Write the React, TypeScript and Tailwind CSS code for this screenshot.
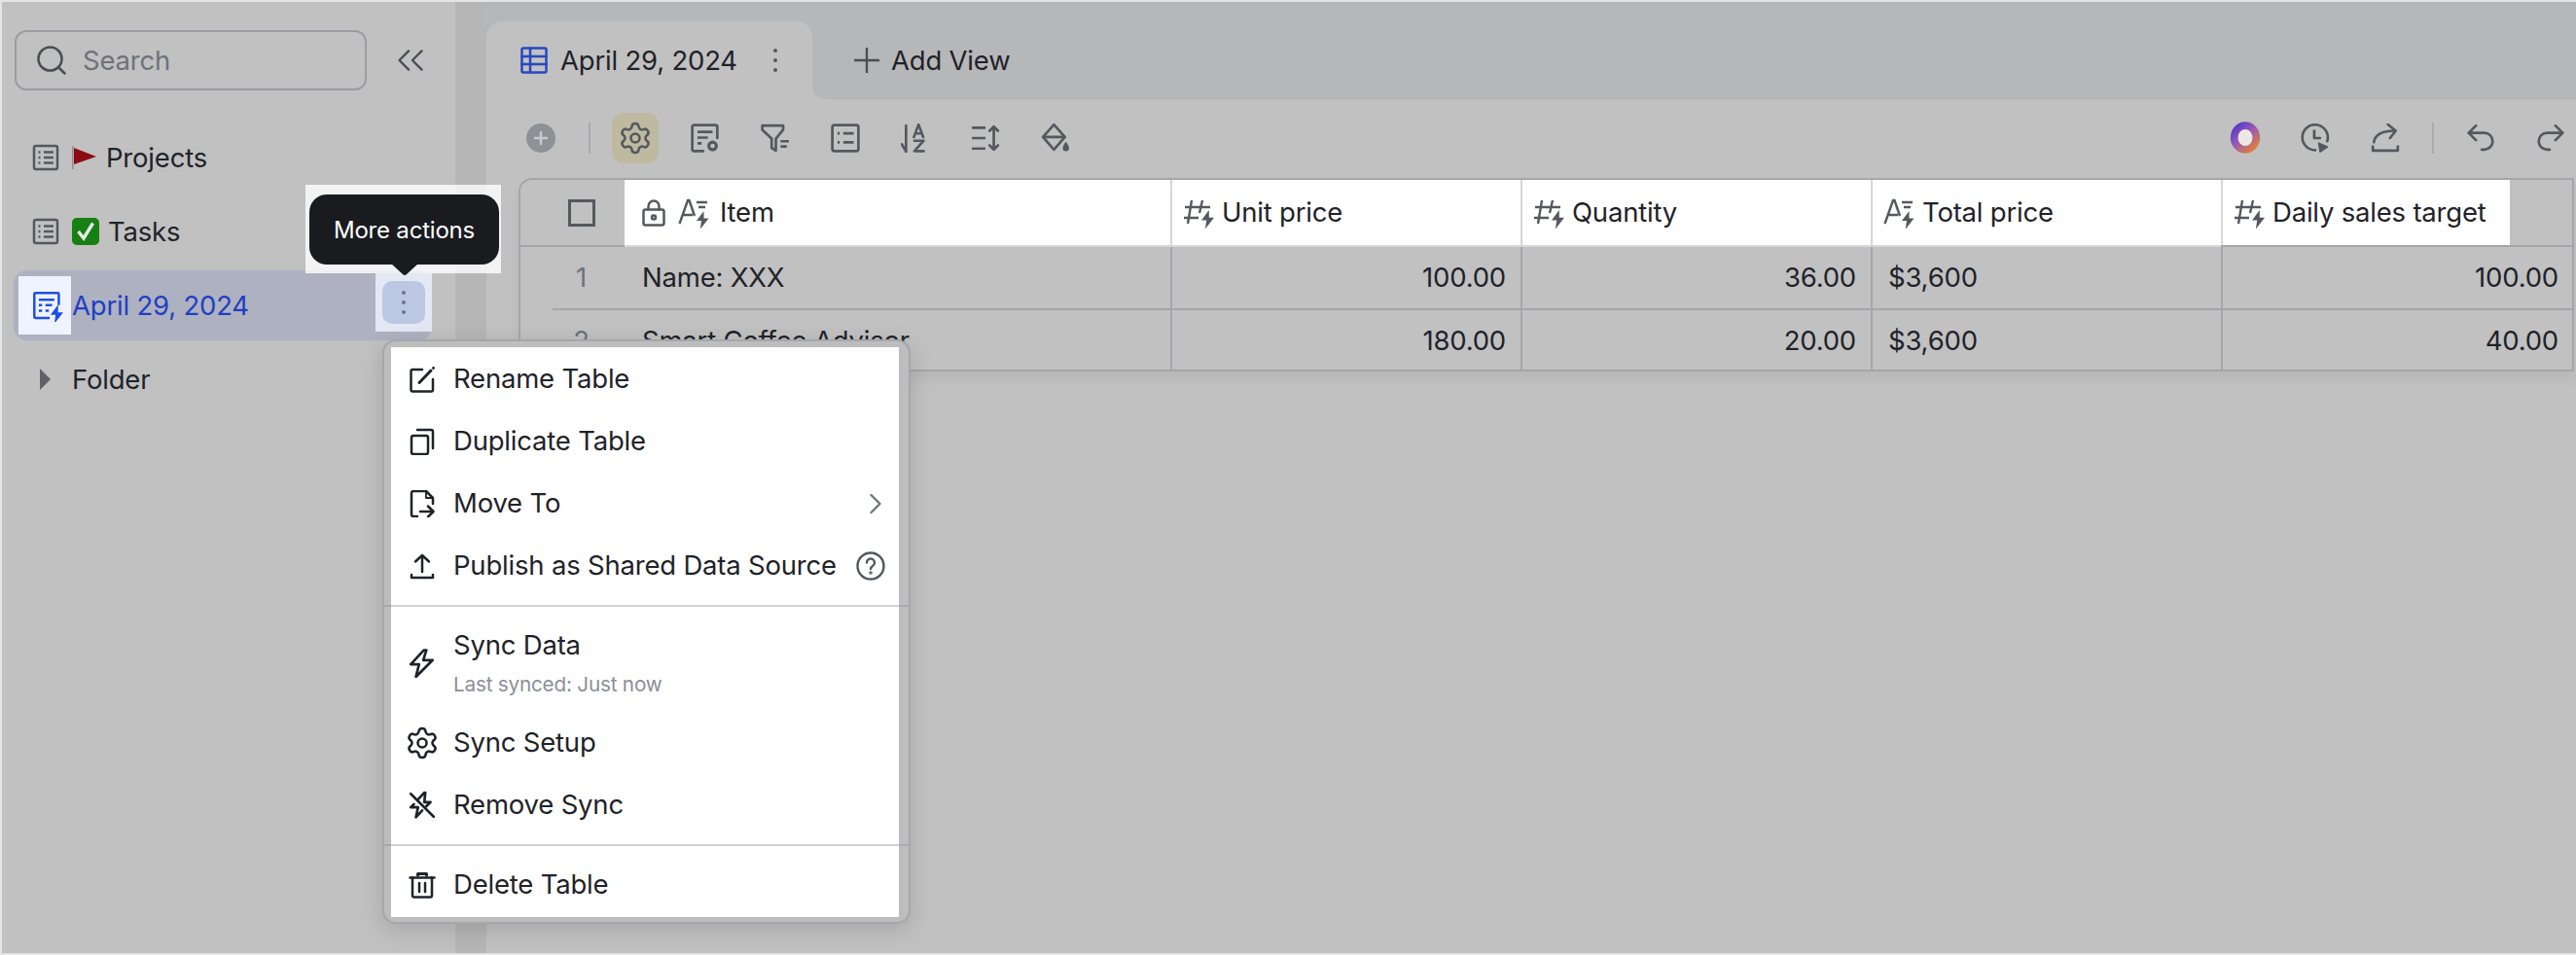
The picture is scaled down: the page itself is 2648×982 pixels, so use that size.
import { ChevronRight, ChevronsLeft, Search, Settings } from 'lucide-react'
import type { ReactNode } from 'react'

type IconProps = { className?: string; size?: number }

function Icon({ className, size = 28, children }: IconProps & { children: ReactNode }) {
  return (
    <svg
      width={size}
      height={size}
      viewBox="0 0 28 28"
      fill="none"
      stroke="currentColor"
      strokeWidth={2.5}
      strokeLinecap="round"
      strokeLinejoin="round"
      className={className}
    >
      {children}
    </svg>
  )
}

const Bolt = ({ x = 0, y = 0, s = 1 }: { x?: number; y?: number; s?: number }) => (
  <path
    transform={`translate(${x} ${y}) scale(${s})`}
    d="M6 0 L0 8 H4 L3 15 L10 6 H6 Z"
    fill="currentColor"
    stroke="none"
  />
)

const ListTableIcon = () => (
  <Icon>
    <rect x="2" y="2" width="24" height="24" rx="2" />
    <path d="M6.5 8.5h2M12 8.5h10M6.5 14h2M12 14h10M6.5 19.5h2M12 19.5h10" strokeLinecap="butt" />
  </Icon>
)

const SyncTableIcon = () => (
  <Icon size={32}>
    <path d="M15 24.5H3a1 1 0 0 1-1-1V3a1 1 0 0 1 1-1h20a1 1 0 0 1 1 1v9" strokeWidth={2.2} />
    <path d="M6 8h14M6 13h3M12 13h6M6 18h3M12 18h3" strokeWidth={2.2} strokeLinecap="butt" />
    <Bolt x={16.5} y={12.5} s={1.15} />
  </Icon>
)

const FlagEmoji = () => (
  <svg width="26" height="24" viewBox="0 0 26 24" className="shrink-0">
    <rect x="0" y="0" width="1.5" height="24" fill="#8d8f8c" />
    <path d="M2 2 L25 11 L2 19 Z" fill="#8c0b12" />
  </svg>
)

const CheckEmoji = () => (
  <svg width="28" height="28" viewBox="0 0 28 28" className="shrink-0">
    <rect width="28" height="28" rx="5" fill="#178012" />
    <path d="M6.5 14 L12 21 L21.5 5.5" fill="none" stroke="#e9e9e9" strokeWidth="3.4" />
  </svg>
)

const GridIcon = () => (
  <Icon className="text-[#2748c0]">
    <rect x="1.5" y="1.5" width="25" height="25" rx="1.5" />
    <path d="M1.5 10h25M1.5 18h25M10 1.5v25" />
  </Icon>
)

const FormIcon = () => (
  <Icon size={30}>
    <path d="M12 26.5H3a1.5 1.5 0 0 1-1.5-1.5V3A1.5 1.5 0 0 1 3 1.5h21A1.5 1.5 0 0 1 25.5 3v11" />
    <path d="M6.5 8h14.5M6.5 13.5h10M6.5 19h4" strokeLinecap="butt" />
    <circle cx="21" cy="21.5" r="3.6" strokeWidth={3} />
  </Icon>
)

const FilterIcon = () => (
  <Icon size={30}>
    <path d="M1.5 2h20v4l-7 8.5V26l-4-2.5v-9L1.5 6Z" />
    <path d="M19 17h8M19 22h6" strokeLinecap="butt" />
  </Icon>
)

const GroupIcon = () => (
  <Icon size={30}>
    <rect x="1.5" y="1.5" width="25" height="25" rx="2" />
    <path d="M6.5 9.5h2M12 9.5h10M6.5 18h2M12 18h10" strokeLinecap="butt" />
  </Icon>
)

const SortIcon = () => (
  <Icon size={30}>
    <path d="M5 2v25M5 27l-4-7" />
    <path d="M12.5 13l4.5-12 4.5 12M14 9.5h6M13 16.5h9l-9 10h9" strokeWidth={2.4} />
  </Icon>
)

const RowHeightIcon = () => (
  <Icon size={30}>
    <path d="M1 4h13M1 14h13M1 24h13" strokeLinecap="butt" />
    <path d="M22 3v22M18 7l4-4 4 4M18 21l4 4 4-4" />
  </Icon>
)

const BucketIcon = () => (
  <Icon size={30}>
    <path d="M12.5 1 L23 13 L12.5 25 L2 13 Z" />
    <path d="M2.5 13h20" />
    <path d="M24 17.5c-1.8 2.5-3 4-3 6a3 3 0 0 0 6 0c0-2-1.2-3.5-3-6Z" fill="currentColor" stroke="none" />
  </Icon>
)

const RingLogo = () => (
  <svg width="32" height="33" viewBox="0 0 30 32">
    <defs>
      <linearGradient id="ring" x1="0.1" y1="0" x2="0.9" y2="1">
        <stop offset="0" stopColor="#5b3cc4" />
        <stop offset="0.45" stopColor="#9a58b8" />
        <stop offset="1" stopColor="#e0803a" />
      </linearGradient>
    </defs>
    <ellipse cx="15" cy="16" rx="11" ry="12" fill="#ece8e4" stroke="url(#ring)" strokeWidth="7.5" />
  </svg>
)

const HistoryIcon = () => (
  <Icon size={30}>
    <path d="M14 25.5A12.2 12.2 0 1 1 26 13.5a12 12 0 0 1-.6 3.5" />
    <path d="M13 7v7h5.5" />
    <path d="M17 18.5l9 4-7.5 5Z" fill="currentColor" strokeWidth={1} />
  </Icon>
)

const ShareIcon = () => (
  <Icon size={30}>
    <path d="M3 18c1-7 7-11 20-11" />
    <path d="M16.5 1L24 7l-5.5 7" />
    <path d="M2 21v5h24v-5" strokeLinecap="butt" />
  </Icon>
)

const UndoIcon = () => (
  <Icon size={30}>
    <path d="M3 9h14.5a8 8 0 0 1 0 16H15" />
    <path d="M9.5 2L2.5 9l7 7" />
  </Icon>
)

const RedoIcon = () => (
  <Icon size={30}>
    <path d="M25 9H10.5a8 8 0 0 0 0 16H13" />
    <path d="M18.5 2l7 7-7 7" />
  </Icon>
)

const LockIcon = () => (
  <Icon>
    <rect x="3.5" y="10.5" width="21" height="16" rx="2" />
    <path d="M8.5 10.5V7a5.5 5.5 0 0 1 11 0v3.5" />
    <circle cx="14" cy="18.5" r="2" />
  </Icon>
)

const TextFieldIcon = () => (
  <svg width="32" height="32" viewBox="0 0 32 32" fill="none" stroke="currentColor" strokeWidth="2.4">
    <path d="M1.5 27L10 3h1.5L17 19M5 18h10" />
    <path d="M19 5h11M21 10h7" />
    <Bolt x={19} y={14} s={1.25} />
  </svg>
)

const NumberFieldIcon = () => (
  <svg width="32" height="32" viewBox="0 0 32 32" fill="none" stroke="currentColor" strokeWidth="2.4">
    <path d="M9 3L5 27M20 3L17 16M2 10h26M1 21h15" />
    <Bolt x={19} y={13} s={1.3} />
  </svg>
)

const RenameIcon = () => (
  <Icon>
    <path d="M14 4H4a1.5 1.5 0 0 0-1.5 1.5V25A1.5 1.5 0 0 0 4 26.5h19.5A1.5 1.5 0 0 0 25 25V14" />
    <path d="M11 17.5L23 5" strokeWidth={3} />
    <circle cx="25.5" cy="2.5" r="1.4" fill="currentColor" stroke="none" />
  </Icon>
)

const CopyIcon = () => (
  <Icon>
    <rect x="3" y="8" width="17" height="19" rx="2" />
    <path d="M9 2h14a2 2 0 0 1 2 2v17" />
  </Icon>
)

const MoveIcon = () => (
  <Icon>
    <path d="M9 27H5a2 2 0 0 1-2-2V3a2 2 0 0 1 2-2h13l7 7v6" />
    <path d="M18 1v7h7" strokeWidth={1.8} />
    <path d="M12 22h13M20 16.5L25.5 22 20 27.5" />
  </Icon>
)

const UploadIcon = () => (
  <Icon>
    <path d="M14 20V3M7 9.5L14 3l7 6.5" />
    <path d="M3 23v3h22v-3" />
  </Icon>
)

const SyncIcon = () => (
  <Icon size={30}>
    <path d="M15.5 1.5L3 15h8l-3 12L24 11h-9l3-9.5Z" />
  </Icon>
)

const SyncOffIcon = () => (
  <Icon size={30}>
    <path d="M16 2L9.5 9M6 13l-3 3h7l-2 9.5L14 19M18 15l4-4h-6l1-9" />
    <path d="M3 3l22 22" />
  </Icon>
)

const TrashIcon = () => (
  <Icon>
    <path d="M1.5 6.5h25" />
    <path d="M9.5 4V2.5h9V4" strokeWidth={3} />
    <path d="M4 6.5V25a1.5 1.5 0 0 0 1.5 1.5h17A1.5 1.5 0 0 0 24 25V6.5" />
    <path d="M11 12v9M17 12v9" />
  </Icon>
)

const HelpIcon = () => (
  <svg width="30" height="30" viewBox="0 0 30 30" fill="none" stroke="currentColor" strokeWidth="2.4" strokeLinecap="round" className="text-[#55585f]">
    <circle cx="15" cy="15" r="13.5" />
    <path d="M11 11.5a4 4 0 1 1 6 3.5c-1.3.8-2 1.5-2 3" />
    <circle cx="15" cy="22" r="0.6" fill="currentColor" />
  </svg>
)

const Dots = ({ className }: IconProps) => (
  <span className={`flex flex-col items-center gap-[6px] ${className}`}>
    <span className="size-[4px] rounded-full bg-current" />
    <span className="size-[4px] rounded-full bg-current" />
    <span className="size-[4px] rounded-full bg-current" />
  </span>
)

function TreeRow({ icon, emoji, label }: { icon: ReactNode; emoji?: ReactNode; label: string }) {
  return (
    <div className="flex h-[76px] items-center pl-[31px] text-[#55585f]">
      {icon}
      <span className="ml-[13px] flex items-center gap-[9px] text-[#1f2329]">
        {emoji}
        <span className="pt-[2px]">{label}</span>
      </span>
    </div>
  )
}

function Sidebar() {
  return (
    <aside className="w-[466px] shrink-0 pt-[29px]">
      <div className="flex items-center">
        <div className="ml-[13px] flex h-[62px] w-[362px] items-center rounded-[12px] border-2 border-[#9b9ca1] pl-[18px] text-[#6f727a]">
          <Search size={36} strokeWidth={1.7} className="text-[#4b4e55]" />
          <span className="ml-[14px] pt-[2px]">Search</span>
        </div>
        <ChevronsLeft size={46} strokeWidth={1.25} className="ml-[22px] text-[#4b4e55]" />
      </div>
      <div className="mt-[31px]">
        <TreeRow icon={<ListTableIcon />} emoji={<FlagEmoji />} label="Projects" />
        <TreeRow icon={<ListTableIcon />} emoji={<CheckEmoji />} label="Tasks" />
        <div className="flex h-[76px] items-center">
          <div className="ml-[12px] flex h-[72px] w-[430px] items-center rounded-[14px] bg-[#aeb1c0] pl-[5px] text-[#1f3fc5]">
            <span className="flex h-[60px] w-[54px] items-center bg-[#eff3ff] pl-[14px] pt-[2px] text-[#1d50e8]">
              <SyncTableIcon />
            </span>
            <span className="ml-[1px] pt-[2px]">April 29, 2024</span>
          </div>
        </div>
        <div className="flex h-[76px] items-center pl-[39px] text-[#1f2329]">
          <span className="border-y-[11px] border-l-[11px] border-y-transparent border-l-[#5f6269]" />
          <span className="ml-[22px] pt-[2px]">Folder</span>
        </div>
      </div>
    </aside>
  )
}

function ToolButton({ children, active }: { children: ReactNode; active?: boolean }) {
  return (
    <div className="flex h-[52px] w-[72px] items-center justify-center">
      <span className={`flex h-[52px] w-[48px] items-center justify-center rounded-[12px] ${active ? 'bg-[#bfb9a1]' : ''}`}>
        {children}
      </span>
    </div>
  )
}

function TabBar() {
  return (
    <div className="flex h-[100px] bg-[#b6b7b9] pt-[20px]">
      <div className="relative flex h-[80px] w-[335px] items-center rounded-t-[16px] bg-[#c1c1c1] pl-[35px] text-[#1f2329]">
        <GridIcon />
        <span className="ml-[13px] pt-[2px]">April 29, 2024</span>
        <Dots className="ml-[37px] text-[#55585f]" />
        <span className="absolute bottom-0 left-full size-[14px] bg-[#c1c1c1]">
          <span className="block size-[14px] rounded-bl-[14px] bg-[#b6b7b9]" />
        </span>
      </div>
      <div className="ml-[42px] flex h-[80px] items-center text-[#1f2329]">
        <svg width="28" height="28" viewBox="0 0 28 28" stroke="#4b4e55" strokeWidth="2.4">
          <path d="M14 1v26M1 14h26" />
        </svg>
        <span className="ml-[11px] pt-[2px]">Add View</span>
      </div>
    </div>
  )
}

function Toolbar() {
  return (
    <div className="flex h-[81px] items-center pb-[2px] pl-[41px] pr-[2px] text-[#55585f]">
      <span className="flex size-[30px] items-center justify-center rounded-full bg-[#8e9196]">
        <svg width="14" height="14" viewBox="0 0 14 14" stroke="#c9cacc" strokeWidth="2.4">
          <path d="M7 0v14M0 7h14" />
        </svg>
      </span>
      <span className="ml-[34px] mr-[10px] h-[32px] w-[2px] bg-[#a9aaae]" />
      <ToolButton active>
        <Settings size={36} strokeWidth={1.7} />
      </ToolButton>
      <ToolButton><FormIcon /></ToolButton>
      <ToolButton><FilterIcon /></ToolButton>
      <ToolButton><GroupIcon /></ToolButton>
      <ToolButton><SortIcon /></ToolButton>
      <ToolButton><RowHeightIcon /></ToolButton>
      <ToolButton><BucketIcon /></ToolButton>
      <div className="ml-auto flex items-center gap-[24px]">
        <span className="flex w-[48px] justify-center"><RingLogo /></span>
        <span className="flex w-[48px] justify-center"><HistoryIcon /></span>
        <span className="flex w-[48px] justify-center"><ShareIcon /></span>
        <span className="h-[32px] w-[2px] bg-[#a9aaae]" />
        <span className="flex w-[48px] justify-center"><UndoIcon /></span>
        <span className="flex w-[48px] justify-center"><RedoIcon /></span>
      </div>
    </div>
  )
}

const columns = 'grid grid-cols-[107px_561px_360px_360px_360px_1fr]'

function HeaderCell({ icon, label }: { icon: ReactNode; label: string }) {
  return (
    <div className="flex items-center border-b-2 border-l-2 border-[#d5d7db] bg-white pl-[11px] text-[#1f2329]">
      <span className="text-[#55585f]">{icon}</span>
      <span className="ml-[8px]">{label}</span>
    </div>
  )
}

function DataRow({ n, item, values, line }: { n: number; item: string; values: string[]; line?: boolean }) {
  const cell = `flex items-center border-l-2 border-[#a5a6aa] ${line ? 'border-b-2' : 'pt-[2px]'}`
  return (
    <div className={`${columns} ${line ? 'h-[65px]' : 'h-[61px]'} text-[#1f2329]`}>
      <div className={`flex flex-col ${line ? '' : 'pt-[2px]'}`}>
        <span className="flex flex-1 items-center justify-center pl-[18px] text-[#6f727a]">{n}</span>
        {line && <span className="ml-[33px] h-[2px] bg-[#a5a6aa]" />}
      </div>
      <div className={`flex items-center pl-[18px] ${line ? 'border-b-2 border-[#a5a6aa]' : 'pt-[2px]'}`}>{item}</div>
      <div className={`${cell} justify-end pr-[15px]`}>{values[0]}</div>
      <div className={`${cell} justify-end pr-[15px]`}>{values[1]}</div>
      <div className={`${cell} pl-[16px]`}>{values[2]}</div>
      <div className={`${cell} justify-end pr-[14px]`}>{values[3]}</div>
    </div>
  )
}

function DataTable() {
  return (
    <div className="ml-[33px] mr-[2px] rounded-tl-[14px] border-x-2 border-y-2 border-[#a5a6aa] shadow-[0_8px_12px_rgba(0,0,0,0.05)]">
      <div className={`${columns} h-[69px]`}>
        <div className="flex items-center justify-center border-b-2 border-[#a5a6aa] pl-[18px] text-[#55585f]">
          <span className="size-[28px] border-[3px] border-current" />
        </div>
        <div className="flex items-center border-b-2 border-[#d5d7db] bg-white pl-[16px]">
          <span className="flex items-center gap-[11px] text-[#55585f]">
            <LockIcon />
            <TextFieldIcon />
          </span>
          <span className="ml-[11px] text-[#1f2329]">Item</span>
        </div>
        <HeaderCell icon={<NumberFieldIcon />} label="Unit price" />
        <HeaderCell icon={<NumberFieldIcon />} label="Quantity" />
        <HeaderCell icon={<TextFieldIcon />} label="Total price" />
        <div className="flex border-b-2 border-[#a5a6aa]">
          <div className="flex w-[297px] items-center border-l-2 border-[#d5d7db] bg-white pl-[11px] text-[#1f2329]">
            <span className="text-[#55585f]"><NumberFieldIcon /></span>
            <span className="ml-[8px]">Daily sales target</span>
          </div>
        </div>
      </div>
      <DataRow n={1} item="Name: XXX" values={['100.00', '36.00', '$3,600', '100.00']} line />
      <DataRow n={2} item="Smart Coffee Advisor" values={['180.00', '20.00', '$3,600', '40.00']} />
    </div>
  )
}

function MenuRow({ icon, children }: { icon: ReactNode; children: ReactNode }) {
  return (
    <div className="flex h-[64px] items-center">
      <span className="flex w-[64px] shrink-0 justify-center">{icon}</span>
      <div className="flex flex-1 items-center pr-[16px]">{children}</div>
    </div>
  )
}

const MenuDivider = () => (
  <div className="h-[2px] bg-[#a9aaae]">
    <div className="ml-[7px] mr-[10px] h-[2px] bg-[#d0d0d0]" />
  </div>
)

function ActionsMenu() {
  return (
    <div className="absolute left-[391px] top-[347px] z-20 w-[543px] rounded-[14px] border-2 border-[#a6a7ab] bg-[#bdbdbd] pb-[5px] pt-[6px] text-[#1f2329] shadow-[0_6px_24px_rgba(0,0,0,0.14)]">
      <div className="ml-[7px] mr-[10px] bg-white pb-[8px] pt-[1px]">
        <MenuRow icon={<RenameIcon />}>Rename Table</MenuRow>
        <MenuRow icon={<CopyIcon />}>Duplicate Table</MenuRow>
        <MenuRow icon={<MoveIcon />}>
          <span className="flex-1">Move To</span>
          <ChevronRight size={36} strokeWidth={1.5} className="mr-[-10px] text-[#6f727a]" />
        </MenuRow>
        <MenuRow icon={<UploadIcon />}>
          <span className="flex-1 whitespace-nowrap">Publish as Shared Data Source</span>
          <span className="mr-[-2px]"><HelpIcon /></span>
        </MenuRow>
      </div>
      <MenuDivider />
      <div className="ml-[7px] mr-[10px] bg-white pb-[8px] pt-[8px]">
        <div className="flex h-[100px] items-center">
          <span className="flex w-[64px] shrink-0 justify-center"><SyncIcon /></span>
          <div className="flex flex-col pb-[2px]">
            <span className="leading-[36px]">Sync Data</span>
            <span className="mt-[9px] text-[20.7px] leading-[28px] text-[#8a8f99]">Last synced: Just now</span>
          </div>
        </div>
        <MenuRow icon={<Settings size={36} strokeWidth={1.7} />}>Sync Setup</MenuRow>
        <MenuRow icon={<SyncOffIcon />}>Remove Sync</MenuRow>
      </div>
      <MenuDivider />
      <div className="ml-[7px] mr-[10px] bg-white pb-[1px] pt-[8px]">
        <MenuRow icon={<TrashIcon />}>Delete Table</MenuRow>
      </div>
    </div>
  )
}

function MoreActionsHint() {
  return (
    <>
      <div className="absolute left-[312px] top-[188px] z-10 h-[91px] w-[201px] bg-white/80" />
      <div className="absolute left-[384px] top-[279px] z-10 flex h-[60px] w-[58px] items-center justify-center bg-[#e4e8f4]">
        <span className="flex size-[44px] items-center justify-center rounded-[10px] bg-[#bcc7e4] text-[#6f7684]">
          <Dots />
        </span>
      </div>
      <div className="absolute left-[316px] top-[198px] z-10 flex h-[72px] w-[195px] items-center justify-center rounded-[18px] bg-[#1a1b1f] pt-[2px] text-[24px] text-white">
        More actions
        <svg width="28" height="12" viewBox="0 0 28 12" className="absolute left-[84px] top-[71px]">
          <path d="M0 0h28L16 11a3 3 0 0 1-4 0Z" fill="#1a1b1f" />
        </svg>
      </div>
    </>
  )
}

export default function App() {
  return (
    <div className="relative flex h-[982px] w-[2648px] overflow-hidden border-y-2 border-l-2 border-[#e4e4e4] bg-[#c1c1c1] font-[Inter,sans-serif] text-[27.5px] tracking-[-0.2px]">
      <Sidebar />
      <div className="w-[32px] shrink-0 bg-[#b6b6b6]" />
      <main className="min-w-0 flex-1">
        <TabBar />
        <Toolbar />
        <DataTable />
      </main>
      <MoreActionsHint />
      <ActionsMenu />
    </div>
  )
}
